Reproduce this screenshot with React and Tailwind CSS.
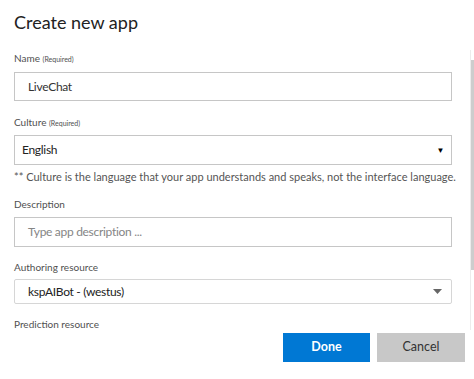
export default function App() {
  return (
    <div className="w-[474px] h-[379px] bg-white overflow-hidden text-[#333333]" style={{ fontFamily: 'Lato, "Open Sans", sans-serif' }}>
      <div className="flex items-start">
        <div className="flex-1 min-w-0 pl-[14px] pr-[18px]">
          <h1 className="pt-[8px] text-[18px] leading-[28px] text-[#222222]">Create new app</h1>

          <div className="mt-[15px] text-[10px] leading-[14px] text-[#505050]">
            Name <span className="text-[7px]">(Required)</span>
          </div>
          <div className="mt-[6px] h-[29px] border border-[#c6c6c6] flex items-center pl-[13px] text-[12px] tracking-[-0.3px] text-[#333333]">
            LiveChat
          </div>

          <div className="mt-[14px] text-[10px] leading-[14px] text-[#505050]">
            Culture <span className="text-[7px]">(Required)</span>
          </div>
          <div className="mt-[5px] h-[30px] border border-[#c6c6c6] flex items-center justify-between pl-[7px] pr-[7px] text-[12px] tracking-[-0.3px] text-[#222222]">
            <span>English</span>
            <span className="text-[8px] text-black">▼</span>
          </div>

          <p className="mt-[5px] text-[11px] leading-[14px] text-[#555555] whitespace-nowrap">
            ** Culture is the language that your app understands and speaks, not the interface language.
          </p>

          <div className="mt-[13px] text-[10px] leading-[14px] text-[#505050]">Description</div>
          <div className="mt-[6px] h-[30px] border border-[#c6c6c6] flex items-center pl-[13px] text-[12px] tracking-[-0.3px] text-[#858585]">
            Type app description ...
          </div>

          <div className="mt-[13px] text-[10px] leading-[14px] text-[#505050]">Authoring resource</div>
          <div className="mt-[5px] h-[25px] border border-[#d6d6d6] rounded-[2px] flex items-center justify-between pl-[13px] pr-[9px] text-[12px] tracking-[-0.3px] text-[#222222]">
            <span>kspAIBot - (westus)</span>
            <svg width="9" height="5" viewBox="0 0 9 5"><path d="M0 0h9L4.5 5z" fill="#666666" /></svg>
          </div>

          <div className="mt-[13px] text-[10px] leading-[14px] text-[#505050]">Prediction resource</div>
        </div>
        <div className="w-[4px] mt-[50px] h-[280px] border-l border-[#ececec] flex flex-col">
          <div className="mt-[10px] h-[210px] bg-[#cdcdcd]"></div>
        </div>
      </div>

      <div className="flex justify-end gap-[7px] pr-[9px] mt-[2px]">
        <button className="w-[87px] h-[29px] bg-[#0078d4] text-white text-[12.5px] font-bold">Done</button>
        <button className="w-[88px] h-[29px] bg-[#c8c8c8] text-[#333333] text-[12.5px]">Cancel</button>
      </div>
    </div>
  );
}
